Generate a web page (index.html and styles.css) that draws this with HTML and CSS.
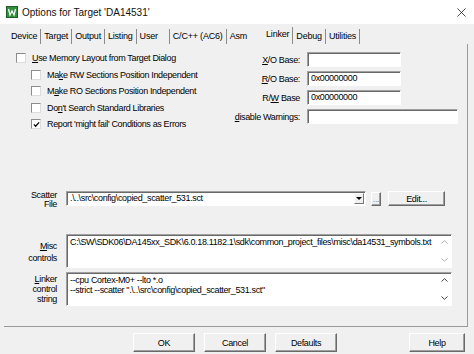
FILE: index.html
```html
<!DOCTYPE html>
<html>
<head>
  <link rel="stylesheet" href="styles.css">
</head>
<body>
  <div class="titlebar">
    <svg class="app-icon" viewBox="0 0 12 12">
      <rect x="0.5" y="0.5" width="11" height="11" fill="#2f8f3a" stroke="#1d5e25"/>
      <path d="M2.5 3 L4 9 L6 5 L8 9 L9.5 3" fill="none" stroke="#fff" stroke-width="1.3"/>
    </svg>
    <span class="title">Options for Target 'DA14531'</span>
    <svg class="close" viewBox="0 0 10 10">
      <path d="M0.5 0.5 L9.5 9.5 M9.5 0.5 L0.5 9.5" stroke="#222" stroke-width="0.9"/>
    </svg>
  </div>

  <div class="tabs">
    <span class="tab">Device</span>
    <span class="tab">Target</span>
    <span class="tab">Output</span>
    <span class="tab">Listing</span>
    <span class="tab tab-user">User</span>
    <span class="tab">C/C++ (AC6)</span>
    <span class="tab tab-asm">Asm</span>
    <span class="tab active">Linker</span>
    <span class="tab">Debug</span>
    <span class="tab">Utilities</span>
  </div>

  <div class="panel">
    <div class="top">
      <div class="checks">
        <div class="check"><span class="box"></span><span><u>U</u>se Memory Layout from Target Dialog</span></div>
        <div class="sub">
          <div class="check"><span class="box"></span><span>Ma<u>k</u>e RW Sections Position Independent</span></div>
          <div class="check"><span class="box"></span><span>M<u>a</u>ke RO Sections Position Independent</span></div>
          <div class="check"><span class="box"></span><span>Do<u>n</u>'t Search Standard Libraries</span></div>
          <div class="check"><span class="box checked">
            <svg viewBox="0 0 8 8"><path d="M1 3.8 L3 6 L7 1.5" fill="none" stroke="#000" stroke-width="1.4"/></svg>
          </span><span>Report 'might fail' Conditions as Errors</span></div>
        </div>
      </div>
      <div class="fields">
        <span class="flabel"><u>X</u>/O Base:</span><span class="input"></span>
        <span class="flabel"><u>R</u>/O Base:</span><span class="input">0x00000000</span>
        <span class="flabel">R/<u>W</u> Base</span><span class="input">0x00000000</span>
        <span class="flabel"><u>d</u>isable Warnings:</span><span class="input wide"></span>
      </div>
    </div>

    <div class="row scatter">
      <div class="rlabel">Scatter<br>File</div>
      <div class="combo">
        <span class="combo-text">.\..\src\config\copied_scatter_531.sct</span>
        <span class="drop"></span>
      </div>
      <button class="btn dots">...</button>
      <button class="btn edit">Edit...</button>
    </div>

    <div class="row misc">
      <div class="rlabel"><u>M</u>isc<br>controls</div>
      <div class="textbox">
        <div class="tb-text">C:\SW\SDK06\DA145xx_SDK\6.0.18.1182.1\sdk\common_project_files\misc\da14531_symbols.txt</div>
        <div class="tb-scroll faint">
          <svg viewBox="0 0 7 4"><path d="M0.5 3.5 L3.5 0.7 L6.5 3.5" fill="none" stroke="currentColor"/></svg>
          <svg viewBox="0 0 7 4"><path d="M0.5 0.5 L3.5 3.3 L6.5 0.5" fill="none" stroke="currentColor"/></svg>
        </div>
      </div>
    </div>

    <div class="row linker">
      <div class="rlabel"><u>L</u>inker<br>control<br>string</div>
      <div class="textbox">
        <div class="tb-text">--cpu Cortex-M0+ --lto *.o
--strict --scatter ".\..\src\config\copied_scatter_531.sct"</div>
        <div class="tb-scroll">
          <svg viewBox="0 0 7 4"><path d="M0.5 3.5 L3.5 0.7 L6.5 3.5" fill="none" stroke="currentColor"/></svg>
          <svg viewBox="0 0 7 4"><path d="M0.5 0.5 L3.5 3.3 L6.5 0.5" fill="none" stroke="currentColor"/></svg>
        </div>
      </div>
    </div>
  </div>

  <div class="footer">
    <button class="btn">OK</button>
    <button class="btn">Cancel</button>
    <button class="btn">Defaults</button>
    <button class="btn help">Help</button>
  </div>
</body>
</html>
```

FILE: styles.css
```css
* {
  box-sizing: border-box;
}

body {
  margin: 0;
  width: 474px;
  height: 354px;
  overflow: hidden;
  background: #f0f0f0;
  font-family: "Liberation Sans", Arial, sans-serif;
  font-size: 9px;
  letter-spacing: -0.35px;
  color: #000;
}

u {
  text-decoration-thickness: 1px;
  text-underline-offset: 1px;
}

/* title bar */
.titlebar {
  display: flex;
  align-items: center;
  height: 24px;
  padding-left: 6px;
  background: #fff;
}

.app-icon {
  width: 12px;
  height: 12px;
  margin-right: 4px;
}

.title {
  font-size: 10px;
  letter-spacing: 0;
  color: #111;
}

.close {
  width: 9px;
  height: 9px;
  margin-left: auto;
  margin-right: 8px;
}

/* tabs */
.tabs {
  display: flex;
  align-items: flex-end;
  height: 20px;
  padding-left: 8px;
}

.tab {
  height: 15px;
  line-height: 14px;
  padding: 0 3px;
  border-right: 1px solid #8a8a8a;
  letter-spacing: -0.2px;
}

.tab-user {
  padding-right: 11px;
}

.tab-asm {
  border-right: none;
  padding-right: 16px;
}

.tab.active {
  height: 17px;
  line-height: 15px;
}

/* main panel */
.panel {
  width: 464px;
  height: 283px;
  margin-left: 4px;
  border-right: 1px solid #9a9a9a;
  border-bottom: 1px solid #9a9a9a;
}

.top {
  display: flex;
  height: 90px;
  padding-top: 6px;
}

.checks {
  width: 232px;
  padding-left: 12px;
}

.check {
  display: flex;
  align-items: center;
  gap: 6px;
  height: 16.5px;
}

.sub {
  padding-left: 15px;
}

.box {
  display: flex;
  align-items: center;
  justify-content: center;
  width: 10px;
  height: 10px;
  background: #fff;
  border: 1px solid;
  border-color: #8c8c8c #dcdcdc #dcdcdc #8c8c8c;
}

.box svg {
  width: 7px;
  height: 7px;
}

.fields {
  display: grid;
  grid-template-columns: 64px auto;
  column-gap: 7px;
  row-gap: 4px;
  align-content: start;
  margin-top: 2px;
}

.flabel {
  justify-self: end;
  align-self: center;
  white-space: nowrap;
}

.input {
  width: 94px;
  height: 15px;
  padding-left: 3px;
  line-height: 12px;
  background: #fff;
  border: 1px solid;
  border-color: #a0a0a0 #fff #fff #a0a0a0;
  box-shadow: inset 1px 1px #696969;
}

.input.wide {
  width: 151px;
}

/* labelled rows */
.row {
  display: flex;
}

.rlabel {
  width: 53px;
  margin-right: 9px;
  text-align: right;
  line-height: 9px;
}

.scatter {
  height: 15px;
  margin-top: 57px;
}

.combo {
  display: flex;
  width: 300px;
  height: 15px;
  background: #fff;
  border: 1px solid;
  border-color: #a0a0a0 #fff #fff #a0a0a0;
  box-shadow: inset 1px 1px #696969;
}

.combo-text {
  flex: 1;
  padding-left: 3px;
  line-height: 13px;
}

.drop {
  display: flex;
  align-items: center;
  justify-content: center;
  width: 10px;
  margin: 1px 1px 1px 0;
  background: #f0f0f0;
  border: 1px solid;
  border-color: #fff #777 #777 #fff;
}

.drop::after {
  content: "";
  border-left: 3px solid transparent;
  border-right: 3px solid transparent;
  border-top: 3px solid #000;
}

.btn {
  height: 19px;
  width: 62px;
  padding: 0;
  font-family: "Liberation Sans", Arial, sans-serif;
  font-size: 9px;
  letter-spacing: -0.35px;
  color: #000;
  background: #f0f0f0;
  border: 1px solid;
  border-color: #fff #696969 #696969 #fff;
  box-shadow: inset -1px -1px #a0a0a0;
}

.dots {
  width: 10px;
  height: 14px;
  margin-left: 5px;
  margin-top: 1px;
  line-height: 8px;
  color: #888;
}

.edit {
  width: 57px;
  height: 15px;
  margin-left: 7px;
}

.misc {
  height: 34px;
  margin-top: 28px;
}

.misc .rlabel {
  align-self: center;
  line-height: 12px;
  padding-top: 2px;
}

.linker {
  height: 34px;
  margin-top: 4px;
}

.linker .rlabel {
  line-height: 10px;
  padding-top: 2px;
}

.textbox {
  display: flex;
  width: 386px;
  height: 34px;
  background: #fff;
  border: 1px solid;
  border-color: #a0a0a0 #fff #fff #a0a0a0;
  box-shadow: inset 1px 1px #696969;
}

.tb-text {
  flex: 1;
  padding: 2px 3px 0;
  line-height: 10px;
  white-space: pre;
  overflow: hidden;
}

.tb-scroll {
  display: flex;
  flex-direction: column;
  justify-content: space-between;
  align-items: center;
  width: 14px;
  padding: 5px 0 5px;
  color: #444;
}

.tb-scroll.faint {
  color: #b0b0b0;
}

.tb-scroll svg {
  width: 7px;
  height: 4px;
}

/* bottom buttons */
.footer {
  display: flex;
  gap: 9px;
  margin-top: 6px;
  padding-left: 133px;
  padding-right: 9px;
}

.help {
  width: 56px;
  margin-left: auto;
}
```
